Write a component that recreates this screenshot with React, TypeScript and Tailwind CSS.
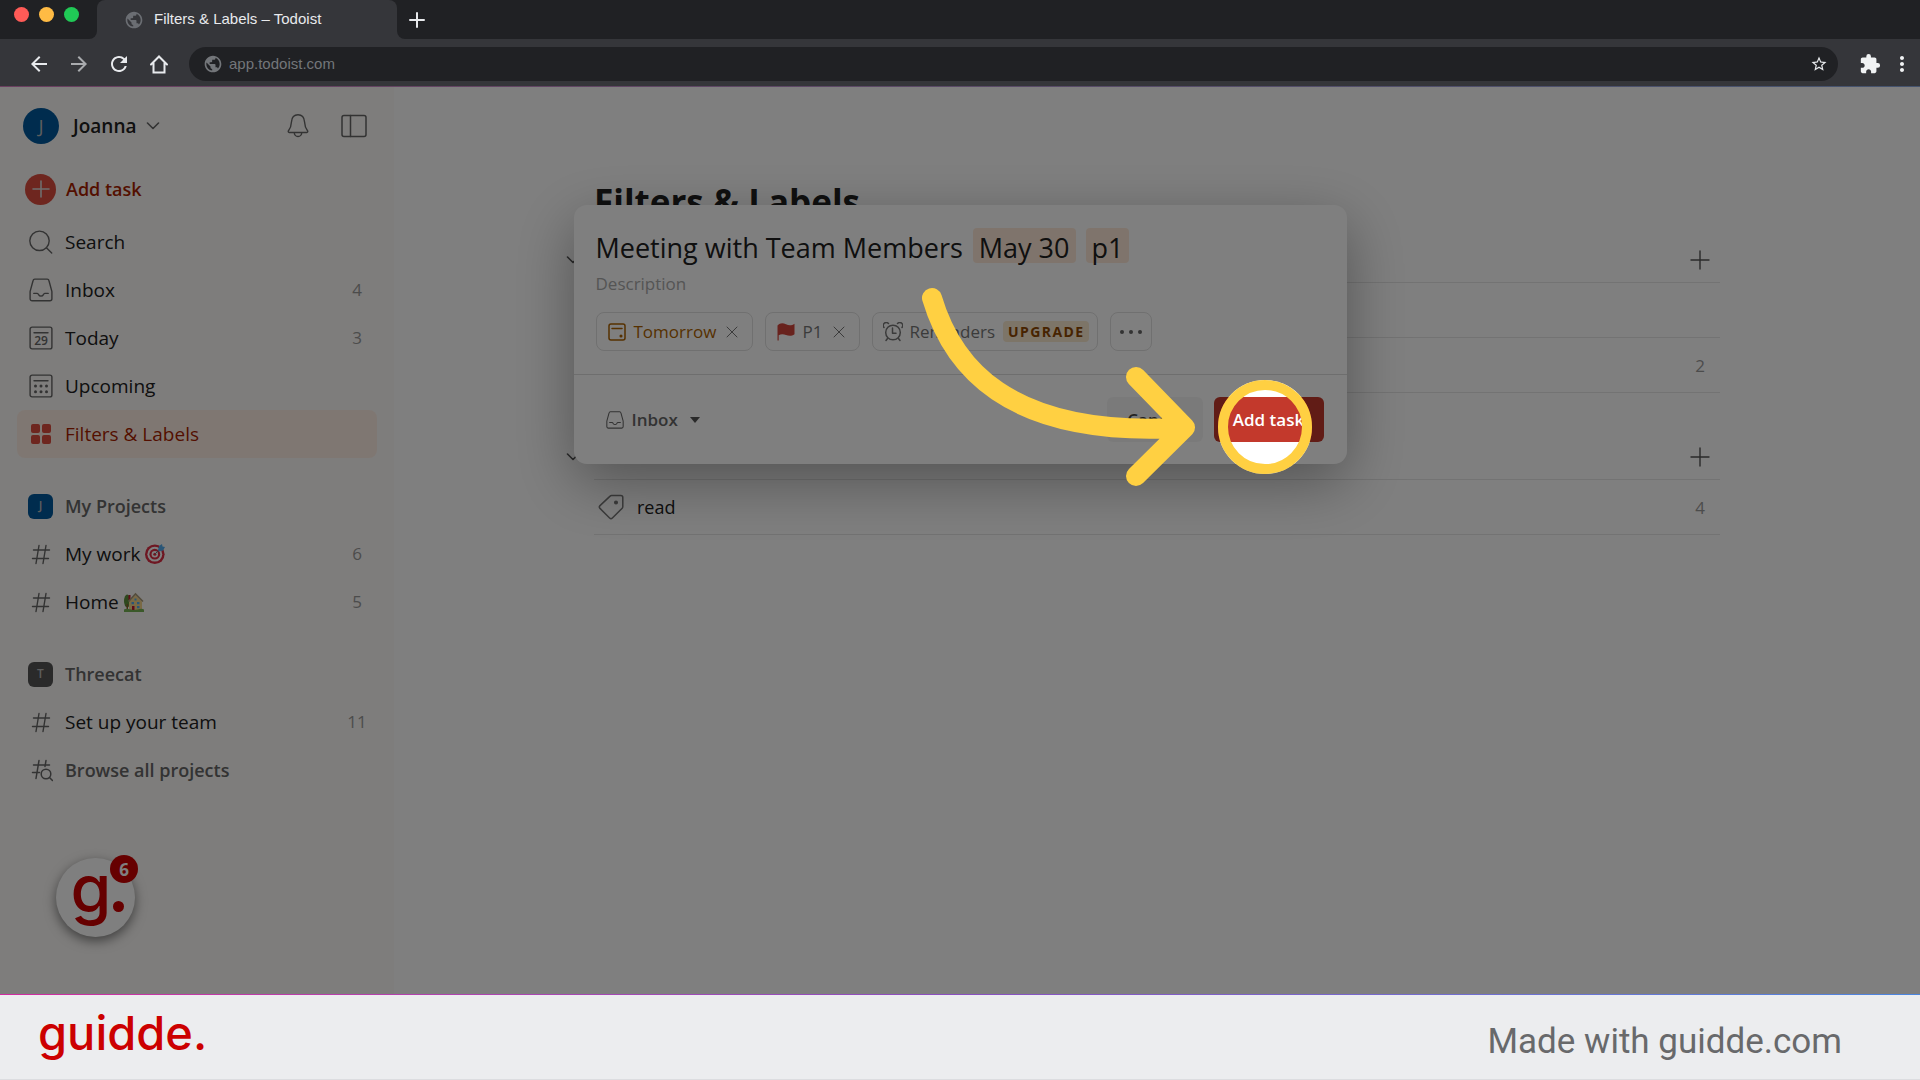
import { ReactNode } from "react";
import {
  MdArrowBack,
  MdArrowForward,
  MdExtension,
  MdMoreVert,
  MdPublic,
  MdRefresh,
  MdStarBorder,
} from "react-icons/md";

const line = {
  fill: "none",
  stroke: "currentColor",
  strokeLinecap: "round",
  strokeLinejoin: "round",
} as const;

function InboxIcon({ className = "size-6" }: { className?: string }) {
  return (
    <svg viewBox="0 0 24 24" className={className} {...line} strokeWidth="1.4">
      <path d="M5.8 1.1h12.4a1.8 1.8 0 0 1 1.7 1.4l2.9 10.6c.1.4.1.7.1 1v6.7a2 2 0 0 1-2 2H3.1a2 2 0 0 1-2-2v-6.7c0-.3 0-.6.1-1L4.1 2.5a1.8 1.8 0 0 1 1.7-1.4z" />
      <path d="M4.8 15.4h3.4c.8 0 1 .4 1.4 1.2.5.9 1.3 1.5 2.4 1.5s1.9-.6 2.4-1.5c.4-.8.6-1.2 1.4-1.2h3.4" />
    </svg>
  );
}

function SearchIcon() {
  return (
    <svg viewBox="0 0 24 24" className="size-6" {...line} strokeWidth="1.4">
      <circle cx="10.5" cy="10.8" r="9.7" />
      <path d="m17.4 17.8 5.3 5.2" />
    </svg>
  );
}

function TodayIcon() {
  return (
    <svg viewBox="0 0 24 24" className="size-6" {...line} strokeWidth="1.4">
      <rect x="1.1" y="1.1" width="21.8" height="21.8" rx="2" />
      <path d="M5 6.7h14" />
      <text
        x="12"
        y="19"
        textAnchor="middle"
        stroke="none"
        fill="currentColor"
        className="font-['Open_Sans',sans-serif] text-[12px] font-semibold"
      >
        29
      </text>
    </svg>
  );
}

function UpcomingIcon() {
  return (
    <svg viewBox="0 0 24 24" className="size-6" {...line} strokeWidth="1.4">
      <rect x="1.1" y="1.1" width="21.8" height="21.8" rx="2" />
      <path d="M5 6.7h14" />
      {[6.5, 12, 17.5].map((x) =>
        [12, 17.8].map((y) => (
          <circle key={`${x}-${y}`} cx={x} cy={y} r="1.5" fill="currentColor" stroke="none" />
        ))
      )}
    </svg>
  );
}

function FiltersIcon() {
  return (
    <svg viewBox="0 0 24 24" className="size-6" fill="#dc4c3e">
      <rect x="2" y="2" width="9" height="9" rx="2" />
      <rect x="13" y="2" width="9" height="9" rx="2" />
      <rect x="2" y="13" width="9" height="9" rx="2" />
      <rect x="13" y="13" width="9" height="9" rx="2" />
    </svg>
  );
}

function HashIcon() {
  return (
    <svg viewBox="0 0 24 24" className="size-6" {...line} strokeWidth="1.4">
      <path d="M4.5 8h16M3.5 16.5h16M10 3.5 7 21.5M17 3.5l-3 18" />
    </svg>
  );
}

function BrowseIcon() {
  return (
    <svg viewBox="0 0 24 24" className="size-6" {...line} strokeWidth="1.5">
      <path d="M4.5 7h16M3.5 14.5h7M10 2.5l-3 18M17 2.5l-1 6" />
      <circle cx="17" cy="16" r="4.8" />
      <path d="m20.5 19.5 3 3" />
    </svg>
  );
}

function TargetEmoji() {
  return (
    <svg viewBox="0 0 20 20" className="size-5" role="img" aria-label="target">
      <circle cx="9.8" cy="10.2" r="9.8" fill="#dd2e44" />
      <circle cx="9.8" cy="10.2" r="7.4" fill="#fff" />
      <circle cx="9.8" cy="10.2" r="5.4" fill="#dd2e44" />
      <circle cx="9.8" cy="10.2" r="3.2" fill="#fff" />
      <circle cx="9.8" cy="10.2" r="1.5" fill="#dd2e44" />
      <path d="M10 10 16 4" stroke="#66757f" strokeWidth="1" />
      <path d="m13 6 1-4 3-2 .5 2.5L20 3l-2 3.5-4 1z" fill="#55acee" />
    </svg>
  );
}

function HouseEmoji() {
  return (
    <svg viewBox="0 0 20 20" className="size-5" role="img" aria-label="house with garden">
      <ellipse cx="3.2" cy="9" rx="3.2" ry="6.5" fill="#5c913b" />
      <path d="M2.6 12h1.4v6H2.6z" fill="#8a5a2b" />
      <path d="M4.5 3h2v5h-2z" fill="#be1931" />
      <path d="M5 9.5 11.5 3l6.5 6.5V18H5z" fill="#f5d48b" />
      <path d="M4.5 9.5 11.5 2 19 9.5" fill="none" stroke="#a89a7a" strokeWidth="1.6" />
      <path d="M8 14h2.5v4H8z" fill="#be1931" />
      <path d="M7.5 10H10v2.2H7.5zM13 10h2.5v2.2H13zM13 14h2.5v2.2H13zM10.5 6.5h2v2h-2z" fill="#55acee" />
      <path d="M0 17.5c3-1.5 6 0 9 .5 4 .2 8-2.5 11-.5V20H0z" fill="#77b255" />
    </svg>
  );
}

function CloseIcon() {
  return (
    <svg viewBox="0 0 12 12" className="size-3" {...line}>
      <path d="m1 1 10 10M11 1 1 11" />
    </svg>
  );
}

function PlusIcon() {
  return (
    <svg viewBox="0 0 20 20" className="size-5" {...line} strokeWidth="1.4">
      <path d="M10 1v18M1 10h18" />
    </svg>
  );
}

function Chevron() {
  return (
    <svg viewBox="0 0 14 8" className="h-2 w-3.5" {...line} strokeWidth="1.6">
      <path d="m1.5 1 5.5 5.5L12.5 1" />
    </svg>
  );
}

function BrowserBar() {
  return (
    <header className="bg-[#35363a] font-['Liberation_Sans',Arial,sans-serif] text-[15px] text-[#e8eaed]">
      <div className="flex h-[39px]">
        <div className="flex w-[97px] gap-2.5 rounded-br-lg bg-[#202124] pt-[7px] pl-[14px]">
          <span className="size-[15px] rounded-full bg-[#ff5b57]" />
          <span className="size-[15px] rounded-full bg-[#ffbb44]" />
          <span className="size-[15px] rounded-full bg-[#20c956]" />
        </div>
        <div className="w-[300px] bg-[#202124]">
          <div className="flex h-full items-center gap-2.5 rounded-t-lg bg-[#35363a] pl-[27px]">
            <MdPublic className="size-5 text-[#6b6e73]" />
            <span>Filters &amp; Labels – Todoist</span>
          </div>
        </div>
        <div className="flex flex-1 items-center rounded-bl-lg bg-[#202124] pl-3">
          <button aria-label="New tab">
            <svg viewBox="0 0 16 16" className="size-4" {...line} strokeWidth="2">
              <path d="M8 1v14M1 8h14" />
            </svg>
          </button>
        </div>
      </div>
      <div className="flex h-[47px] items-center pt-[3px] pr-1.5 pl-[27px]">
        <div className="flex gap-4">
          <button aria-label="Back">
            <MdArrowBack className="size-6" />
          </button>
          <button aria-label="Forward" className="text-[#a9abae]">
            <MdArrowForward className="size-6" />
          </button>
          <button aria-label="Reload">
            <MdRefresh className="size-6" />
          </button>
          <button aria-label="Home">
            <svg viewBox="0 0 24 24" className="size-6" {...line} strokeWidth="2" strokeLinejoin="miter">
              <path d="M4 12.5 12 4.5l8 8M6.5 11v9.5h11V11" />
            </svg>
          </button>
        </div>
        <div className="ml-[18px] flex h-[34px] flex-1 items-center gap-1.5 rounded-full bg-[#202124] pr-2.5 pl-3.5 text-[#73767a]">
          <MdPublic className="size-5" />
          <input
            aria-label="Address"
            defaultValue="app.todoist.com"
            className="min-w-0 flex-1 bg-transparent outline-none"
          />
          <button aria-label="Bookmark" className="text-[#e8eaed]">
            <MdStarBorder className="size-[18px]" />
          </button>
        </div>
        <button aria-label="Extensions" className="ml-[21px]">
          <MdExtension className="size-[22px] text-[#f1f3f4]" />
        </button>
        <button aria-label="Menu" className="ml-[9px]">
          <MdMoreVert className="size-6 text-[#f1f3f4]" />
        </button>
      </div>
      <div className="h-px bg-linear-to-r from-[#6b3f60] to-[#45546f]" />
    </header>
  );
}

function NavRow({
  icon,
  count,
  className = "text-[19px]",
  children,
}: {
  icon: ReactNode;
  count?: number;
  className?: string;
  children: ReactNode;
}) {
  return (
    <a href="#" className={`flex h-12 items-center gap-3 rounded-lg pl-3 ${className}`}>
      <span className="text-[#666]">{icon}</span>
      <span className="flex flex-1 items-center gap-[5px]">{children}</span>
      {count !== undefined && <span className="w-10 text-center text-[17px] text-[#999]">{count}</span>}
    </a>
  );
}

function ProjectHeading({ letter, color, children }: { letter: string; color: string; children: ReactNode }) {
  return (
    <a href="#" className="mt-6 flex h-12 items-center gap-3 pl-[11px] font-semibold text-[#666]">
      <span className={`flex size-[25px] items-center justify-center rounded-md text-[12px] text-[#bbb] ${color}`}>
        {letter}
      </span>
      {children}
    </a>
  );
}

function Sidebar() {
  return (
    <aside className="w-[394px] shrink-0 bg-[#fcfaf8] px-[17px] pt-5 text-[18px] text-[#202020]">
      <div className="flex h-[38px] items-center pl-1.5">
        <button className="flex items-center text-[19px] font-semibold">
          <span className="mr-3.5 flex size-9 items-center justify-center rounded-full bg-[#00589c] font-normal text-[#bbb]">
            J
          </span>
          Joanna
          <span className="ml-2.5 text-[#666]">
            <Chevron />
          </span>
        </button>
        <button aria-label="Notifications" className="ml-auto text-[#666]">
          <svg viewBox="0 0 24 26" className="h-[26px] w-6" {...line} strokeWidth="1.4">
            <path d="M12 1.7c4 0 6.2 3 6.5 7 .3 5 1 6.500 3 9 .5.7.3 1.8-.7 1.8H3.2c-1 0-1.200-1.100-.7-1.800 2-2.500 2.700-4 3-9 .3-4 2.500-7 6.500-7zM8.300 19.700c0 2 1.500 3.800 3.700 3.800s3.700-1.800 3.700-3.800" />
          </svg>
        </button>
        <button aria-label="Toggle sidebar" className="mr-2.5 ml-[31px] text-[#666]">
          <svg viewBox="0 0 26 24" className="h-6 w-[26px]" {...line} strokeWidth="1.5">
            <rect x="1" y="1.5" width="24" height="21" rx="2" />
            <path d="M9.5 1.5v21" />
          </svg>
        </button>
      </div>
      <button className="mt-[25px] mb-2.5 flex h-[38px] items-center gap-2.5 pl-2 font-semibold text-[#a81f00]">
        <span className="flex size-[31px] items-center justify-center rounded-full bg-[#dc4c3e] text-[#ddd]">
          <svg viewBox="0 0 18 18" className="size-[18px]" {...line} strokeWidth="1.6">
            <path d="M9 1v16M1 9h16" />
          </svg>
        </span>
        Add task
      </button>
      <nav>
        <NavRow icon={<SearchIcon />}>Search</NavRow>
        <NavRow icon={<InboxIcon />} count={4}>Inbox</NavRow>
        <NavRow icon={<TodayIcon />} count={3}>Today</NavRow>
        <NavRow icon={<UpcomingIcon />}>Upcoming</NavRow>
        <NavRow icon={<FiltersIcon />} className="bg-[#ffefe5] text-[19px] text-[#a81f00]">
          Filters &amp; Labels
        </NavRow>
        <ProjectHeading letter="J" color="bg-[#00589c]">My Projects</ProjectHeading>
        <NavRow icon={<HashIcon />} count={6}>
          My work <TargetEmoji />
        </NavRow>
        <NavRow icon={<HashIcon />} count={5}>
          Home <HouseEmoji />
        </NavRow>
        <ProjectHeading letter="T" color="bg-[#555]">Threecat</ProjectHeading>
        <NavRow icon={<HashIcon />} count={11}>Set up your team</NavRow>
        <NavRow icon={<BrowseIcon />} className="font-semibold text-[#666]">
          Browse all projects
        </NavRow>
      </nav>
    </aside>
  );
}

function SectionHeader() {
  return (
    <div className="-ml-7 flex h-11 items-center justify-between text-[#555]">
      <button aria-label="Collapse section">
        <Chevron />
      </button>
      <button aria-label="Add" className="mr-2.5">
        <PlusIcon />
      </button>
    </div>
  );
}

function ListRow({ count, children }: { count?: number; children?: ReactNode }) {
  return (
    <li className="flex h-[55px] items-center border-b border-[#e6e6e6] text-[18px] text-[#202020]">
      <span className="flex flex-1 items-center gap-[13px] pl-1">{children}</span>
      {count !== undefined && <span className="w-10 pt-0.5 text-center text-[17px] text-[#999]">{count}</span>}
    </li>
  );
}

function FiltersPage() {
  return (
    <main className="min-w-0 flex-1 bg-white px-10 pt-[91px]">
      <div className="mx-auto max-w-[1126px]">
        <h1 className="mb-3 text-[35px] leading-12 font-bold text-[#202020]">Filters &amp; Labels</h1>
        <SectionHeader />
        <ul className="mb-[42px] border-t border-[#e6e6e6]">
          <ListRow />
          <ListRow count={2} />
        </ul>
        <SectionHeader />
        <ul className="border-t border-[#e6e6e6]">
          <ListRow count={4}>
            <svg viewBox="0 0 26 26" className="size-[26px] text-[#777]" {...line} strokeWidth="1.5">
              <path d="M13.5 1.5h9.3a2 2 0 0 1 2 2v9.3c0 .5-.2 1-.6 1.4L14.4 24a2 2 0 0 1-2.8 0L2 14.4a2 2 0 0 1 0-2.8L12.1 2.1c.4-.4.9-.6 1.4-.6z" />
              <circle cx="18" cy="8.5" r="1.3" fill="currentColor" />
            </svg>
            read
          </ListRow>
        </ul>
      </div>
    </main>
  );
}

function GuiddeBubble() {
  return (
    <button
      aria-label="Guidde, 6 notifications"
      className="absolute bottom-[57px] left-14 size-[79px] rounded-full bg-white text-[#c00] shadow-[0_4px_12px_rgba(0,0,0,0.5)]"
    >
      <span className="flex items-baseline justify-center gap-0.5 pb-5 pl-1 font-['Inter',sans-serif] text-[66px] leading-[60px] font-medium">
        g<span className="size-[11px] rounded-full bg-[#c00]" />
      </span>
      <span className="absolute -top-[3px] -right-[3px] flex size-7 items-center justify-center rounded-full bg-[#c00] text-[17px] leading-none font-bold text-white">
        6
      </span>
    </button>
  );
}

function QuickAdd() {
  return (
    <div className="absolute inset-x-0 top-[118px] flex justify-center">
      <div
        role="dialog"
        aria-label="Add task"
        className="relative w-[773px] rounded-[13px] bg-white shadow-[0_18px_60px_rgba(0,0,0,0.35)]"
      >
        <div className="px-[22px] pt-[23px] pb-[23px]">
          <h2 className="flex h-[35px] items-center gap-2.5 text-[27px] leading-[35px] font-medium whitespace-nowrap text-[#202020]">
            <span className="pt-[3px]">Meeting with Team Members</span>
            <mark className="h-[35px] rounded bg-[#ffe9d9] px-1.5 pt-0.5 text-[#202020]">May 30</mark>
            <mark className="h-[35px] rounded bg-[#ffe9d9] px-1.5 pt-0.5 text-[#202020]">p1</mark>
          </h2>
          <input
            aria-label="Description"
            placeholder="Description"
            className="mt-1.5 block h-7 w-full text-[17px] outline-none placeholder:text-[#aaa]"
          />
          <div className="mt-[15px] flex h-[39px] gap-3 text-[17px] text-[#777]">
            <button className="flex w-[157px] items-center rounded-lg border border-[#e0e0e0] pl-[11px] text-[#ad6200]">
              <svg viewBox="0 0 18 18" className="mr-2 size-[18px]" {...line} strokeWidth="1.5">
                <rect x="1" y="1" width="16" height="16" rx="2" />
                <path d="M4 5.5h10" />
                <circle cx="13" cy="13" r=".8" fill="currentColor" />
              </svg>
              Tomorrow
              <span className="ml-auto pr-3.5 text-[#777]">
                <CloseIcon />
              </span>
            </button>
            <button className="flex w-[95px] items-center rounded-lg border border-[#e0e0e0] pl-[11px]">
              <svg viewBox="0 0 18 18" className="mr-2 size-[18px]" fill="#d1453b">
                <path d="M.5 2.5C3-.3 6-.2 9 1.3c3 1.4 5.5 1.4 8.5-.5v10.500c-3 2.200-6 1.700-8.500.7-2.500-1-5-1.200-7.300.2V17.500H.5z" />
              </svg>
              P1
              <span className="ml-auto pr-3.5">
                <CloseIcon />
              </span>
            </button>
            <button className="flex w-[226px] items-center rounded-lg border border-[#e0e0e0] pl-2.5">
              <svg viewBox="0 0 20 20" className="mr-[7px] size-5" {...line} strokeWidth="1.5">
                <circle cx="10" cy="10.5" r="7.3" />
                <path d="M9.5 6v5.2h3.5M4.5 16.5 3 18.5M15.5 16.5l1.500 2M1 5.5A3 3 0 0 1 5.500 1.500M19 5.500a3 3 0 0 0-4.500-4" />
              </svg>
              Reminders
              <span className="mr-2 ml-auto rounded bg-[#faead1] pr-1 pl-[5px] text-[14px] leading-[21px] font-bold tracking-widest text-[#8f4700]">
                UPGRADE
              </span>
            </button>
            <button
              aria-label="More actions"
              className="flex w-[42px] items-center justify-center gap-[5px] rounded-lg border border-[#e0e0e0]"
            >
              <span className="size-1 rounded-full bg-[#666]" />
              <span className="size-1 rounded-full bg-[#666]" />
              <span className="size-1 rounded-full bg-[#666]" />
            </button>
          </div>
        </div>
        <div className="flex h-[90px] items-center gap-[11px] border-t border-[#ddd] px-[23px] text-[17px] font-semibold">
          <button className="mr-auto flex items-center pl-[9px] text-[#666]">
            <InboxIcon className="mr-2 size-[18px]" />
            Inbox
            <svg viewBox="0 0 10 6" className="ml-3 h-1.5 w-2.5" fill="#555">
              <path d="M0 0h10L5 6z" />
            </svg>
          </button>
          <button className="h-[45px] w-24 rounded-md bg-[#f5f5f5] text-[#444]">Cancel</button>
          <button className="relative h-[45px] w-[110px] rounded-md bg-[#c3392c] text-white">
            Add task
            {/* spotlight: its outer shadow dims everything else in the app area */}
            <span className="absolute -top-[17px] left-1 size-[94px] rounded-full border-10 border-[#ffd042] shadow-[0_0_0_2400px_rgba(0,0,0,0.5)]" />
          </button>
        </div>
        <svg
          viewBox="0 0 280 210"
          className="absolute top-20 left-[344px] h-[210px] w-[280px]"
          fill="none"
          stroke="#ffd042"
          strokeWidth="20"
          strokeLinecap="round"
          strokeLinejoin="round"
        >
          <path d="M14 13C33 77 85 154 267 142.5M218 92l49 50.5-49 48.5" />
        </svg>
      </div>
    </div>
  );
}

export default function App() {
  return (
    <div className="flex min-h-screen flex-col font-['Open_Sans','Noto_Sans',sans-serif]">
      <BrowserBar />
      <div className="relative flex flex-1 overflow-hidden">
        <Sidebar />
        <FiltersPage />
        <GuiddeBubble />
        <QuickAdd />
      </div>
      <div className="h-px bg-linear-to-r from-[#d12aa0] via-[#8a4fc0] to-[#4a86e0]" />
      <footer className="flex h-[85px] items-center justify-between border-b border-[#dcdde0] bg-[#ecedef] pr-[78px] pl-[38px]">
        <a href="#" className="pb-2.5 font-['Inter',sans-serif] text-[47px] leading-none font-medium text-[#c00]">
          guidde.
        </a>
        <p className="pt-2 font-['Roboto',sans-serif] text-[35px] leading-none text-[#68696b]">
          Made with guidde.com
        </p>
      </footer>
    </div>
  );
}
